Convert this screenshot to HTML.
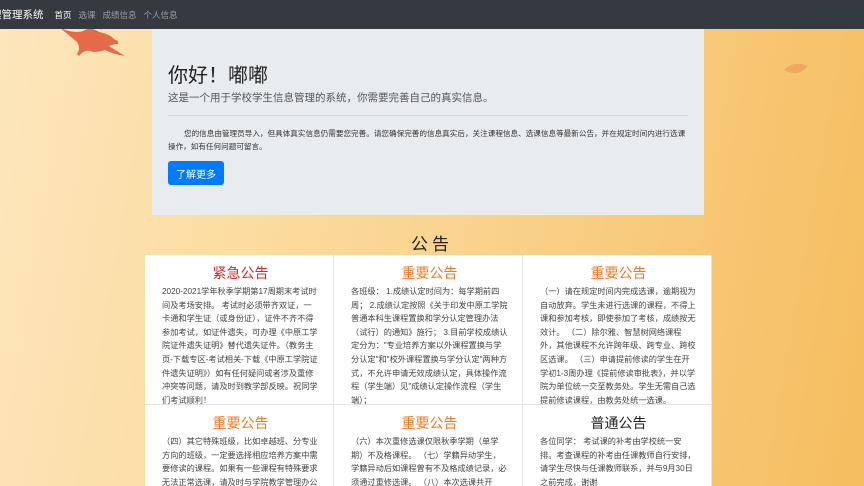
<!DOCTYPE html>
<html><head><meta charset="utf-8"><style>
*{margin:0;padding:0;box-sizing:border-box}
html,body{width:864px;height:486px;overflow:hidden}
body{font-family:"Liberation Sans","Noto Sans CJK SC",sans-serif;background:linear-gradient(100deg,#fde6bd 0%,#fcdca0 30%,#f9d089 60%,#f5bd5e 100%);position:relative}
.nav{position:absolute;left:0;top:0;width:864px;height:29px;background:#343a40;color:#fff;display:flex;align-items:center}
.nav .b{font-size:10.5px;margin-left:-9px;margin-right:11px}
.nav a{font-size:8.5px;margin-right:7px;color:rgba(255,255,255,.5)}
.nav a.on{color:#fff}
.jum{position:absolute;left:152px;top:29px;width:552px;height:186px;background:#e9ecef;padding:0 16px}
h1{font-weight:400;font-size:20px;color:#222;margin-top:34px;line-height:26px}
.lead{font-size:10.5px;color:#555;margin-top:1px}
hr{border:0;border-top:1px solid #d6d9dc;margin:10px 0 11px}
.p{font-size:7.6px;color:#333;line-height:13px;text-indent:16px}
.btn{display:inline-block;margin-top:8px;background:#007bff;color:#fff;font-size:10px;padding:5px 8px;border-radius:3px;height:24px}
.gt{position:absolute;top:230px;left:0;width:864px;text-align:center;font-size:17px;color:#222;letter-spacing:4px}
.grid{position:absolute;left:145px;top:255px;width:567px;height:231px;overflow:hidden;display:grid;grid-template-columns:189px 189px 189px;grid-template-rows:150px 81px;background:#fff}
.c{border-right:1px solid #e4e4e4;border-bottom:1px solid #e4e4e4;padding:8px 14px 0 17px;overflow:hidden}
.c:nth-child(n+4){border-bottom:0}
.c h3{font-weight:400;text-align:center;font-size:14px;margin-bottom:2px;line-height:20px}
.c div{font-size:8.2px;line-height:13.6px;color:#444}
.r{color:#e8212b}.o{color:#f07a26}.k{color:#222}
</style></head><body>
<svg style="position:absolute;left:55px;top:26px" width="75" height="40"><path d="M5 2 Q20 8 28 5 Q36 0 44 6 Q55 8 60 14 Q64 14 63 18 Q58 18 54 20 Q60 24 70 30 Q58 28 50 24 Q44 26 38 26 Q30 22 24 30 L22 28 Q26 22 22 16 Q15 10 5 2Z" fill="#e56a4a"/></svg>
<svg style="position:absolute;left:782px;top:60px" width="30" height="18"><path d="M2 10 Q12 0 26 6 Q16 18 2 10Z" fill="#f0a860"/></svg>
<div class="nav"><span class="b">理管理系统</span><a class="on">首页</a><a>选课</a><a>成绩信息</a><a>个人信息</a></div>
<div class="jum"><h1>你好！嘟嘟</h1><div class="lead">这是一个用于学校学生信息管理的系统，你需要完善自己的真实信息。</div><hr><div class="p">您的信息由管理员导入，但具体真实信息仍需要您完善。请您确保完善的信息真实后，关注课程信息、选课信息等最新公告，并在规定时间内进行选课操作，如有任何问题可留言。</div><span class="btn">了解更多</span></div>
<div class="gt">公告</div>
<div class="grid">
<div class="c"><h3 class="r">紧急公告</h3><div>2020-2021学年秋季学期第17周期末考试时间及考场安排。 考试时必须带齐双证，一卡通和学生证（或身份证），证件不齐不得参加考试，如证件遗失，可办理《中原工学院证件遗失证明》替代遗失证件。（教务主页-下载专区-考试相关-下载《中原工学院证件遗失证明》）如有任何疑问或者涉及重修冲突等问题，请及时到教学部反映。祝同学们考试顺利！</div></div>
<div class="c"><h3 class="o">重要公告</h3><div>各班级： 1.成绩认定时间为：每学期前四周； 2.成绩认定按照《关于印发中原工学院普通本科生课程置换和学分认定管理办法（试行）的通知》施行； 3.目前学校成绩认定分为："专业培养方案以外课程置换与学分认定"和"校外课程置换与学分认定"两种方式，不允许申请无效成绩认定，具体操作流程（学生端）见"成绩认定操作流程（学生端）；</div></div>
<div class="c"><h3 class="o">重要公告</h3><div>（一）请在规定时间内完成选课，逾期视为自动放弃。学生未进行选课的课程，不得上课和参加考核，即使参加了考核，成绩按无效计。 （二）除尔雅、智慧树网络课程外，其他课程不允许跨年级、跨专业、跨校区选课。 （三）申请提前修读的学生在开学初1-3周办理《提前修读审批表》，并以学院为单位统一交至教务处。学生无需自己选提前修读课程，由教务处统一选课。</div></div>
<div class="c"><h3 class="o">重要公告</h3><div>（四）其它特殊班级，比如卓越班、分专业方向的班级，一定要选择相应培养方案中需要修读的课程。如果有一些课程有特殊要求无法正常选课，请及时与学院教学管理办公</div></div>
<div class="c"><h3 class="o">重要公告</h3><div>（六）本次重修选课仅限秋季学期（单学期）不及格课程。 （七）学籍异动学生，学籍异动后如课程曾有不及格成绩记录，必须通过重修选课。 （八）本次选课共开</div></div>
<div class="c"><h3 class="k">普通公告</h3><div>各位同学： 考试课的补考由学校统一安排。考查课程的补考由任课教师自行安排，请学生尽快与任课教师联系，并与9月30日之前完成，谢谢</div></div>
</div>
</body></html>
